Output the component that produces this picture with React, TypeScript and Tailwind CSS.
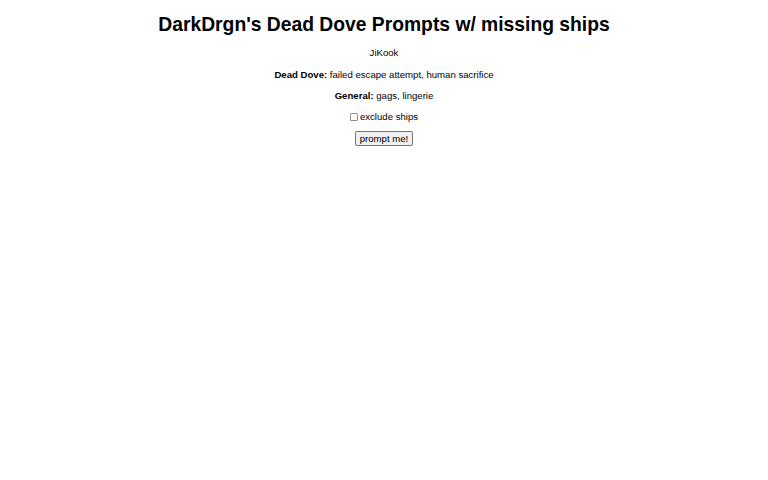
import { useState } from 'react';

const ship = 'JiKook';
const deadDove = ['failed escape attempt', 'human sacrifice'];
const general = ['gags', 'lingerie'];

export default function App() {
  const [excludeShips, setExcludeShips] = useState(false);

  return (
    <div className="min-h-screen bg-white text-black text-center font-['Liberation_Sans',Arial,sans-serif]">
      <h1 className="pt-[13px] text-[19.3px] leading-[24px] font-bold">
        DarkDrgn's Dead Dove Prompts w/ missing ships
      </h1>
      <div className="mt-[9px] flex flex-col items-center gap-[8.6px] text-[9.6px] leading-[13px]">
        <p>{excludeShips ? '' : ship}</p>
        <p>
          <b>Dead Dove:</b> {deadDove.join(', ')}
        </p>
        <p>
          <b>General:</b> {general.join(', ')}
        </p>
        <label className="-mt-[1px] flex items-center gap-[2px]">
          <input
            type="checkbox"
            checked={excludeShips}
            onChange={(e) => setExcludeShips(e.target.checked)}
            className="mt-[1px] h-[8px] w-[8px] appearance-none border border-[#8f8f8f] bg-white rounded-[1px]"
          />
          exclude ships
        </label>
        <button className="border border-[#767676] bg-[#efefef] px-[4px] py-[1px] text-[9.6px] leading-[11px] rounded-[2px]">
          prompt me!
        </button>
      </div>
    </div>
  );
}
